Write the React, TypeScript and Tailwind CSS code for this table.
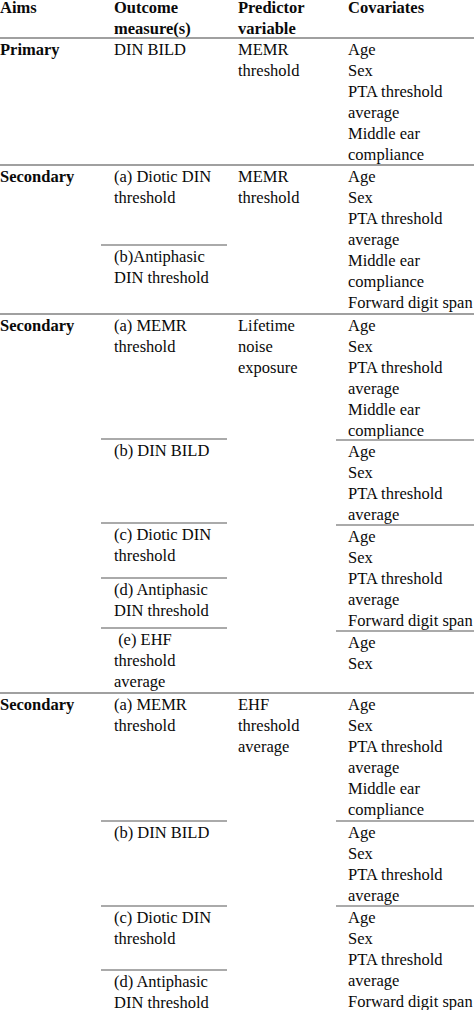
import React from "react";

type Block = { lines: string[]; h?: string };

function Text({ lines }: { lines: string[] }) {
  return (
    <>
      {lines.map((t, i) => (
        <div key={i} className="whitespace-pre">
          {t}
        </div>
      ))}
    </>
  );
}

function Outcome({ blocks }: { blocks: Block[] }) {
  return (
    <div className="flex w-[126px] flex-col">
      {blocks.map((b, i) => (
        <div
          key={i}
          className={
            (i > 0 ? "border-t-2 border-[#aaaaaa] " : "") +
            "pl-[13px] " +
            (b.h ? b.h : "flex-1")
          }
        >
          <Text lines={b.lines} />
        </div>
      ))}
    </div>
  );
}

function Covariates({ blocks }: { blocks: Block[] }) {
  return (
    <div className="flex flex-1 flex-col">
      {blocks.map((b, i) => (
        <div
          key={i}
          className={
            (i > 0 ? "border-t-2 border-[#aaaaaa] " : "") +
            "pl-[12px] " +
            (b.h ? b.h : "flex-1")
          }
        >
          <Text lines={b.lines} />
        </div>
      ))}
    </div>
  );
}

const A = ["Age", "Sex", "PTA threshold", "average", "Middle ear", "compliance"];
const B = ["Age", "Sex", "PTA threshold", "average"];
const C = ["Age", "Sex", "PTA threshold", "average", "Forward digit span"];

export default function App() {
  return (
    <div className="h-[1010px] w-[474px] overflow-hidden bg-white font-['Liberation_Serif','Times_New_Roman',serif] text-[16.5px] leading-[21px] text-[#0a0a0a]">
      <div className="-mt-[3px]">
        {/* header */}
        <div className="flex h-[40px] font-bold">
          <div className="w-[101px]">Aims</div>
          <div className="w-[126px] pl-[13px]">
            <div>Outcome</div>
            <div>measure(s)</div>
          </div>
          <div className="w-[109px] pl-[11px]">
            <div>Predictor</div>
            <div>variable</div>
          </div>
          <div className="flex-1 pl-[12px]">Covariates</div>
        </div>

        {/* Primary */}
        <div className="flex h-[127px] border-t-2 border-[#a0a0a0]">
          <div className="w-[101px] font-bold">Primary</div>
          <Outcome blocks={[{ lines: ["DIN BILD"] }]} />
          <div className="w-[109px] pl-[11px]">
            <Text lines={["MEMR", "threshold"]} />
          </div>
          <Covariates blocks={[{ lines: A }]} />
        </div>

        {/* Secondary 1 */}
        <div className="flex h-[149px] border-t-2 border-[#a0a0a0]">
          <div className="w-[101px] font-bold">Secondary</div>
          <Outcome
            blocks={[
              { lines: ["(a) Diotic DIN", "threshold"], h: "h-[78px]" },
              { lines: ["(b)Antiphasic", "DIN threshold"] },
            ]}
          />
          <div className="w-[109px] pl-[11px]">
            <Text lines={["MEMR", "threshold"]} />
          </div>
          <Covariates blocks={[{ lines: [...A, "Forward digit span"] }]} />
        </div>

        {/* Secondary 2 */}
        <div className="flex h-[379px] border-t-2 border-[#a0a0a0]">
          <div className="w-[101px] font-bold">Secondary</div>
          <Outcome
            blocks={[
              { lines: ["(a) MEMR", "threshold"], h: "h-[124px]" },
              { lines: ["(b) DIN BILD"], h: "h-[85px]" },
              { lines: ["(c) Diotic DIN", "threshold"], h: "h-[56px]" },
              { lines: ["(d) Antiphasic", "DIN threshold"], h: "h-[50px]" },
              { lines: [" (e) EHF", "threshold", "average"] },
            ]}
          />
          <div className="w-[109px] pl-[11px]">
            <Text lines={["Lifetime", "noise", "exposure"]} />
          </div>
          <Covariates
            blocks={[
              { lines: A, h: "h-[124px]" },
              { lines: B, h: "h-[85px]" },
              { lines: C, h: "h-[106px]" },
              { lines: ["Age", "Sex"] },
            ]}
          />
        </div>

        {/* Secondary 3 */}
        <div className="flex h-[330px] border-t-2 border-[#a0a0a0]">
          <div className="w-[101px] font-bold">Secondary</div>
          <Outcome
            blocks={[
              { lines: ["(a) MEMR", "threshold"], h: "h-[126px]" },
              { lines: ["(b) DIN BILD"], h: "h-[85px]" },
              { lines: ["(c) Diotic DIN", "threshold"], h: "h-[64px]" },
              { lines: ["(d) Antiphasic", "DIN threshold"] },
            ]}
          />
          <div className="w-[109px] pl-[11px]">
            <Text lines={["EHF", "threshold", "average"]} />
          </div>
          <Covariates
            blocks={[
              { lines: A, h: "h-[126px]" },
              { lines: B, h: "h-[85px]" },
              { lines: C },
            ]}
          />
        </div>
      </div>
    </div>
  );
}
